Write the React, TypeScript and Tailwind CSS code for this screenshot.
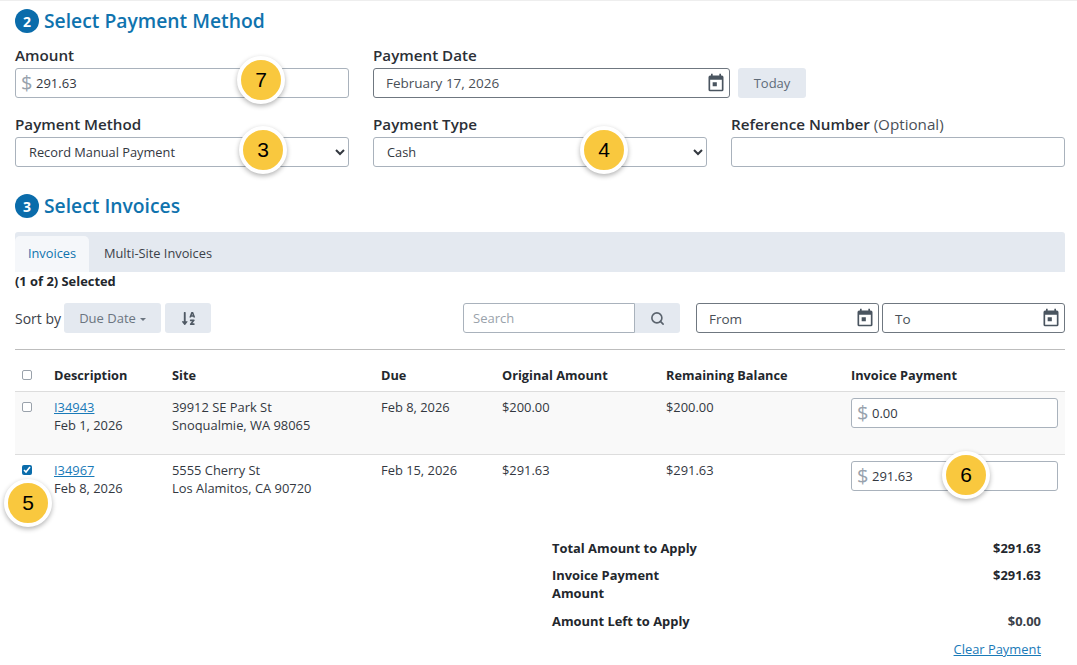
import { FaSortAlphaDown } from "react-icons/fa";
import { Search } from "lucide-react";

const inputBox = "h-[30px] rounded-[3px] border border-[#a9b2bc] bg-white";

function CalendarIcon() {
  return (
    <svg viewBox="0 0 24 24" className="h-[20px] w-[20px] fill-[#4a5560]">
      <path d="M16 1h2v2h1a2 2 0 0 1 2 2v15a2 2 0 0 1-2 2H5a2 2 0 0 1-2-2V5a2 2 0 0 1 2-2h1V1h2v2h8V1zM5 8v12h14V8H5zm3 3h5v5H8v-5z" />
    </svg>
  );
}

function Heading({ step, title }: { step: number; title: string }) {
  return (
    <div className="flex items-center gap-[5px]">
      <span className="flex h-6 w-6 items-center justify-center rounded-full bg-[#0a6cab] text-[14px] font-bold text-white">
        {step}
      </span>
      <h2 className="text-[19.3px] leading-6 font-[550] text-[#0f73ae]">{title}</h2>
    </div>
  );
}

function Label({ children }: { children: React.ReactNode }) {
  return <label className="block text-[15.2px] leading-5 font-semibold text-[#2b2f36]">{children}</label>;
}

function MoneyInput({ value, className }: { value: string; className: string }) {
  return (
    <div className={`flex items-center pl-[5px] ${inputBox} ${className}`}>
      <span className="w-[15px] text-[20px] leading-none font-medium text-[#98a2ad]">$</span>
      <span className="pt-px text-[13px] text-[#33383f]">{value}</span>
    </div>
  );
}

function DateInput({ label, className }: { label: string; className: string }) {
  return (
    <div className={`flex h-[30px] items-center justify-between rounded-[3px] border border-[#6f7780] bg-white pr-[3px] pl-3 ${className}`}>
      <span className="text-[13.5px] text-[#4a5058]">{label}</span>
      <CalendarIcon />
    </div>
  );
}

function SelectField({ value, className }: { value: string; className: string }) {
  return (
    <select
      defaultValue={value}
      className={`pl-[9px] text-[12.8px] text-[#33383f] ${inputBox} ${className}`}
    >
      <option>{value}</option>
    </select>
  );
}

function Checkbox({ checked }: { checked: boolean }) {
  if (checked) {
    return <input type="checkbox" readOnly checked className="block h-[10px] w-[10px] accent-[#0a6cab]" />;
  }
  return (
    <input
      type="checkbox"
      readOnly
      className="block h-[10px] w-[10px] appearance-none rounded-[2px] border border-[#9aa2ab] bg-white"
    />
  );
}

function Badge({ n, className }: { n: number; className: string }) {
  return (
    <div
      className={`absolute flex h-12 w-12 items-center justify-center rounded-full border-[4px] border-white bg-[#f9c83e] font-['Liberation_Sans',sans-serif] text-[21px] text-black shadow-[0_2px_5px_rgba(0,0,0,0.3)] ${className}`}
    >
      {n}
    </div>
  );
}

const invoices = [
  {
    id: "I34943",
    date: "Feb 1, 2026",
    line1: "39912 SE Park St",
    line2: "Snoqualmie, WA 98065",
    due: "Feb 8, 2026",
    amount: "$200.00",
    payment: "0.00",
    checked: false,
  },
  {
    id: "I34967",
    date: "Feb 8, 2026",
    line1: "5555 Cherry St",
    line2: "Los Alamitos, CA 90720",
    due: "Feb 15, 2026",
    amount: "$291.63",
    payment: "291.63",
    checked: true,
  },
];

const headers = ["Description", "Site", "Due", "Original Amount", "Remaining Balance", "Invoice Payment"];

export default function App() {
  return (
    <div className="relative h-[665px] w-[1077px] overflow-hidden border-t border-[#eeeeee] bg-white pt-2 pr-3 pl-[15px] font-['Open_Sans',sans-serif] text-[12.9px] text-[#33383f]">
      <Heading step={2} title="Select Payment Method" />

      <div className="mt-[12px] flex gap-6">
        <div className="w-[334px]">
          <Label>Amount</Label>
          <MoneyInput value="291.63" className="mt-[3px] w-full" />
        </div>
        <div className="w-[334px]">
          <Label>Payment Date</Label>
          <div className="mt-[3px] flex gap-2">
            <DateInput label="February 17, 2026" className="w-[357px] shrink-0" />
            <button className="h-[30px] w-[68px] shrink-0 rounded-[3px] bg-[#e4e9f0] pt-px text-[13px] text-[#5f6b78]">
              Today
            </button>
          </div>
        </div>
      </div>

      <div className="mt-[16px] flex gap-6">
        <div className="w-[334px]">
          <Label>Payment Method</Label>
          <SelectField value="Record Manual Payment" className="mt-[3px] w-full" />
        </div>
        <div className="w-[334px]">
          <Label>Payment Type</Label>
          <SelectField value="Cash" className="mt-[3px] w-full" />
        </div>
        <div className="w-[334px]">
          <Label>
            Reference Number <span className="font-normal text-[#4a5058]">(Optional)</span>
          </Label>
          <div className={`mt-[3px] w-full ${inputBox}`} />
        </div>
      </div>

      <div className="mt-[27px]">
        <Heading step={3} title="Select Invoices" />
      </div>

      <div className="mt-[14px] flex h-10 items-end rounded-t-[3px] bg-[#e4e9f0] text-[12.8px]">
        <div className="flex h-9 w-[74px] items-center justify-center rounded-t-[5px] bg-[#f5f7fa] text-[#0f73ae]">
          Invoices
        </div>
        <div className="flex h-9 items-center pl-[15px] text-[#3b4149]">Multi-Site Invoices</div>
      </div>
      <div className="mt-px text-[12.9px] leading-[17px] font-bold text-[#23272d]">(1 of 2) Selected</div>

      <div className="mt-[13px] flex h-[30px] items-center">
        <span className="w-[49px] text-[14px] text-[#3b4149]">Sort by</span>
        <button className="flex h-[30px] w-[97px] items-center justify-center gap-1 rounded-[3px] bg-[#e4e9f0] pt-px text-[13px] text-[#6b7580]">
          Due Date
          <span className="mt-[2px] h-0 w-0 border-x-[3px] border-t-[3px] border-x-transparent border-t-[#6b7580]" />
        </button>
        <button className="ml-1 flex h-[30px] w-[46px] items-center justify-center rounded-[3px] bg-[#e4e9f0] text-[15px] text-[#4f5964]">
          <FaSortAlphaDown />
        </button>
        <div className="ml-[252px] flex h-[30px] w-[217px]">
          <div className="flex flex-1 items-center rounded-l-[3px] border border-[#a9b2bc] pt-px pl-[9px] text-[13px] text-[#9aa2ab]">
            Search
          </div>
          <div className="flex w-[45px] items-center justify-center rounded-r-[3px] bg-[#e4e9f0] text-[#5a636d]">
            <Search size={15} strokeWidth={2.6} />
          </div>
        </div>
        <DateInput label="From" className="ml-4 w-[183px] [&>span]:pt-[3px]" />
        <DateInput label="To" className="ml-[3px] w-[183px] [&>span]:pt-[3px]" />
      </div>

      <div className="mt-[16px] border-t border-[#bdbdbd]" />

      <table className="w-[1050px] table-fixed border-collapse">
        <colgroup>
          <col className="w-[32px]" />
          <col className="w-[118px]" />
          <col className="w-[209px]" />
          <col className="w-[121px]" />
          <col className="w-[164px]" />
          <col className="w-[185px]" />
          <col className="w-[221px]" />
        </colgroup>
        <thead>
          <tr className="h-[41px] border-b border-[#dddddd] text-left text-[12.75px] font-bold text-[#23272d]">
            <th className="pt-[10px] pl-[7px]">
              <Checkbox checked={false} />
            </th>
            {headers.map((h) => (
              <th key={h} className="px-[7px] pt-[10px] font-bold">
                {h}
              </th>
            ))}
          </tr>
        </thead>
        <tbody>
          {invoices.map((inv) => (
            <tr
              key={inv.id}
              className={`h-[63px] align-top leading-[18.5px] ${inv.checked ? "" : "border-b border-[#dddddd] bg-[#f9f9f9]"}`}
            >
              <td className="pt-[10px] pl-[7px]">
                <Checkbox checked={inv.checked} />
              </td>
              <td className="px-[7px] pt-[6px]">
                <a className="text-[#1a7ab8] underline">{inv.id}</a>
                <div>{inv.date}</div>
              </td>
              <td className="px-[7px] pt-[6px]">
                {inv.line1}
                <br />
                {inv.line2}
              </td>
              <td className="px-[7px] pt-[6px]">{inv.due}</td>
              <td className="px-[7px] pt-[6px]">{inv.amount}</td>
              <td className="px-[7px] pt-[6px]">{inv.amount}</td>
              <td className="px-[7px] pt-[6px]">
                <MoneyInput value={inv.payment} className="w-[207px]" />
              </td>
            </tr>
          ))}
        </tbody>
      </table>

      <div className="mt-[22px] ml-[537px] w-[489px] text-[12.9px] leading-[18px] font-bold text-[#23272d]">
        <div className="flex justify-between">
          <span>Total Amount to Apply</span>
          <span>$291.63</span>
        </div>
        <div className="mt-[9px] flex justify-between">
          <span className="w-[130px]">Invoice Payment Amount</span>
          <span>$291.63</span>
        </div>
        <div className="mt-[10px] flex justify-between">
          <span>Amount Left to Apply</span>
          <span className="text-[#3b4149]">$0.00</span>
        </div>
        <div className="mt-[10px] text-right font-normal">
          <a className="text-[#1a7ab8] underline">Clear Payment</a>
        </div>
      </div>

      <Badge n={7} className="top-[55px] left-[237px]" />
      <Badge n={3} className="top-[125px] left-[239px]" />
      <Badge n={4} className="top-[125px] left-[580px]" />
      <Badge n={5} className="top-[478px] left-[4px]" />
      <Badge n={6} className="top-[450px] left-[942px]" />
    </div>
  );
}
